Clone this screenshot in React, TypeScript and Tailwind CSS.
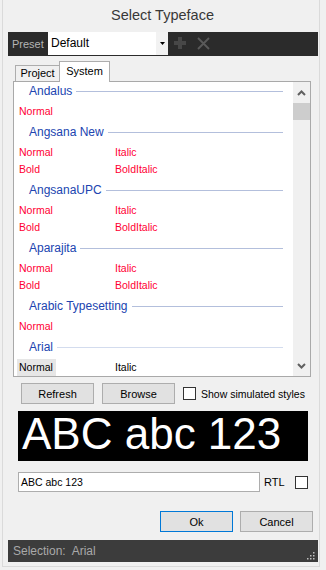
import React from "react";

type Family = { name: string; rows: string[][]; installed?: boolean };

// only the rows that fit in the visible part of the list
const families: Family[] = [
  { name: "Andalus", rows: [["Normal"]] },
  { name: "Angsana New", rows: [["Normal", "Italic"], ["Bold", "BoldItalic"]] },
  { name: "AngsanaUPC", rows: [["Normal", "Italic"], ["Bold", "BoldItalic"]] },
  { name: "Aparajita", rows: [["Normal", "Italic"], ["Bold", "BoldItalic"]] },
  { name: "Arabic Typesetting", rows: [["Normal"]] },
  { name: "Arial", rows: [["Normal", "Italic"]], installed: true },
];

function Chevron({ up }: { up?: boolean }) {
  return (
    <svg width="9" height="6" viewBox="0 0 9 6">
      <path
        d={up ? "M1 5 L4.5 1.5 L8 5" : "M1 1 L4.5 4.5 L8 1"}
        fill="none"
        stroke="#606060"
        strokeWidth="2"
      />
    </svg>
  );
}

function FamilyGroup({ family }: { family: Family }) {
  return (
    <div>
      <div className="h-[24px] flex items-center pl-[15px] pr-[10px]">
        <span className="text-[12px] text-[#2044b0] whitespace-nowrap">{family.name}</span>
        <div className={`flex-1 h-px ml-[4px] ${family.installed ? "bg-[#d3dcee]" : "bg-[#b3bfdc]"}`} />
      </div>
      {family.rows.map((row, i) => (
        <div key={i} className="h-[17px] flex pl-[3px]">
          {row.map((style) => {
            const selected = family.installed && style === "Normal";
            return (
              <div key={style} className="w-[96px] h-[17px] flex items-start">
                <span
                  className={`block h-[17px] leading-[17px] pl-[2px] pr-[3px] text-[10.5px] ${
                    family.installed ? "text-black" : "text-[#ff0033]"
                  } ${selected ? "bg-[#e6e6e6]" : ""}`}
                >
                  {style}
                </span>
              </div>
            );
          })}
        </div>
      ))}
    </div>
  );
}

function Button({ label, primary }: { label: string; primary?: boolean }) {
  return (
    <div
      role="button"
      className={`w-[73px] h-[21px] shrink-0 bg-[#e1e1e1] border text-black flex items-center justify-center ${
        primary ? "border-[#0078d7]" : "border-[#adadad]"
      }`}
    >
      <span className="text-[11px] leading-[14px]">{label}</span>
    </div>
  );
}

export default function App() {
  return (
    <div
      className="w-[326px] h-[570px] bg-[#f0f0f0] pl-[2px] overflow-hidden"
      style={{ fontFamily: '"Liberation Sans", Arial, sans-serif' }}
    >
      <div className="w-[318px] h-[567px] border-l border-r border-b border-[#dadada] flex flex-col">
        {/* title */}
        <div className="h-[32px] flex items-center justify-center pl-[3px] text-[14.5px] text-[#383838]">
          Select Typeface
        </div>

        {/* preset bar */}
        <div className="ml-[5px] w-[310px] h-[24px] bg-[#2b2b2b] flex items-start pl-[4px]">
          <span className="w-[36px] h-[24px] leading-[24px] text-[11px] text-[#b4b4b4]">Preset</span>
          <div className="w-[120px] h-[23px] bg-white flex">
            <span className="flex-1 pl-[3px] leading-[23px] text-[12px] text-black">Default</span>
            <div className="w-[12px] bg-[#f2f2f2] flex items-center justify-center">
              <svg width="5" height="3" viewBox="0 0 5 3">
                <path d="M0 0 H5 L2.5 3 Z" fill="#000" />
              </svg>
            </div>
          </div>
          <svg className="ml-[6px] mt-[5px]" width="12" height="12" viewBox="0 0 12 12">
            <path d="M6 0 V12 M0 6 H12" stroke="#474747" strokeWidth="4" />
          </svg>
          <svg className="ml-[11px] mt-[5px]" width="13" height="13" viewBox="0 0 13 13">
            <path d="M1 1 L12 12 M12 1 L1 12" stroke="#5a5a5a" strokeWidth="1.8" />
          </svg>
        </div>

        {/* tabs */}
        <div className="mt-[5px] h-[20px] flex items-end pl-[12px]">
          <div className="w-[45px] h-[16px] border-t border-l border-r border-[#adadad] bg-[#f0f0f0] flex items-center justify-center text-[11px] text-black">
            Project
          </div>
          <div className="relative z-10 -ml-px -mb-px w-[51px] h-[21px] border-t border-l border-r border-[#adadad] bg-white flex items-center justify-center pb-[2px] text-[11px] text-black">
            System
          </div>
        </div>

        {/* font list */}
        <div className="ml-[10px] w-[298px] h-[296px] border border-[#a9a9a9] bg-white flex">
          <div className="flex-1 overflow-hidden">
            <div className="-mt-[3px]">
              {families.map((f) => (
                <FamilyGroup key={f.name} family={f} />
              ))}
            </div>
          </div>
          <div className="w-[17px] bg-[#f0f0f0] flex flex-col">
            <div className="h-[20px] flex items-center justify-center pt-[1px]">
              <Chevron up />
            </div>
            <div className="mt-[1px] h-[17px] bg-[#cdcdcd]" />
            <div className="flex-1" />
            <div className="h-[20px] flex items-center justify-center">
              <Chevron />
            </div>
          </div>
        </div>

        {/* actions */}
        <div className="mt-[6px] h-[21px] flex items-center pl-[18px] gap-[8px]">
          <Button label="Refresh" />
          <Button label="Browse" />
          <div className="w-[13px] h-[13px] shrink-0 border border-[#333333] bg-white" />
          <span className="-ml-[3px] text-[10.5px] leading-[14px] text-black whitespace-nowrap">
            Show simulated styles
          </span>
        </div>

        {/* preview */}
        <div className="mt-[7px] ml-[15px] w-[290px] h-[50px] bg-black pl-[4px]">
          <div className="text-[44px] leading-[46px] text-white whitespace-nowrap">ABC abc 123</div>
        </div>

        {/* sample text */}
        <div className="mt-[11px] ml-[15px] h-[20px] flex items-center">
          <div className="w-[242px] h-[20px] border border-[#adadad] bg-white pl-[2px] leading-[18px] text-[10.5px] text-black">
            ABC abc 123
          </div>
          <span className="ml-[4px] text-[11px] text-black">RTL</span>
          <div className="ml-[10px] w-[13px] h-[13px] border border-[#333333] bg-white" />
        </div>

        {/* ok / cancel */}
        <div className="mt-[19px] h-[21px] flex justify-end gap-[7px] pr-[6px]">
          <Button label="Ok" primary />
          <Button label="Cancel" />
        </div>

        {/* status bar */}
        <div className="mt-[8px] ml-[5px] w-[310px] h-[22px] bg-[#3c3c3c] flex items-center justify-between pl-[5px] pr-[3px]">
          <span className="text-[12px] text-[#a9a9a9] whitespace-pre">Selection:  Arial</span>
          <svg className="self-end mb-[2px]" width="8" height="8" viewBox="0 0 8 8">
            <g fill="#bdbdbd">
              <rect x="6" y="0" width="1.5" height="1.5" />
              <rect x="3" y="3" width="1.5" height="1.5" />
              <rect x="6" y="3" width="1.5" height="1.5" />
              <rect x="0" y="6" width="1.5" height="1.5" />
              <rect x="3" y="6" width="1.5" height="1.5" />
              <rect x="6" y="6" width="1.5" height="1.5" />
            </g>
          </svg>
        </div>
      </div>
    </div>
  );
}
